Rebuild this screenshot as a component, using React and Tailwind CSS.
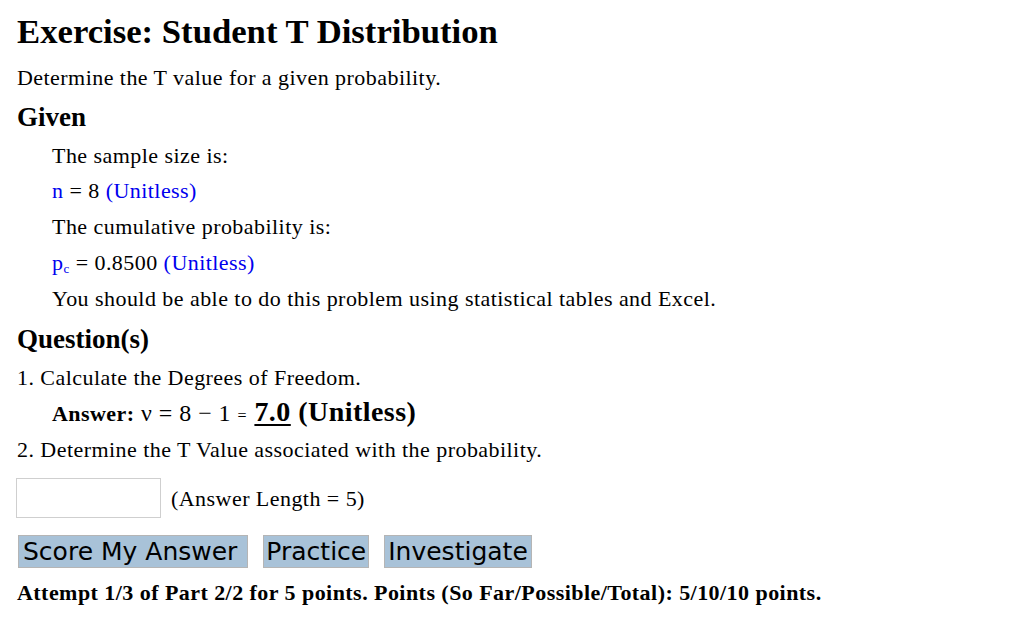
export default function App() {
  const serif = { fontFamily: '"Liberation Serif", "Times New Roman", serif' };
  const btnFont = { fontFamily: '"DejaVu Sans", Verdana, sans-serif' };
  return (
    <div className="w-[1024px] h-[637px] bg-white text-black pl-[17px] pt-[6px]" style={serif}>
      <div className="h-[44px] flex items-end">
        <h1 className="text-[34.7px] font-bold leading-none">Exercise: Student T Distribution</h1>
      </div>
      <div className="h-[39px] flex items-end text-[22px] tracking-[0.45px] leading-none">
        Determine the T value for a given probability.
      </div>
      <div className="h-[42px] flex items-end">
        <h2 className="text-[27px] font-bold leading-none">Given</h2>
      </div>
      <div className="pl-[35px] text-[22px] tracking-[0.45px]">
        <div className="h-[36px] flex items-end leading-none">The sample size is:</div>
        <div className="h-[35px] flex items-end leading-none">
          <span className="text-[#0000ee]">n</span>
          <span>&nbsp;= 8&nbsp;</span>
          <span className="text-[#0000ee]">(Unitless)</span>
        </div>
        <div className="h-[36px] flex items-end leading-none">The cumulative probability is:</div>
        <div className="h-[36px] flex items-end leading-none">
          <span className="text-[#0000ee]">p<sub className="text-[13px]">c</sub></span>
          <span>&nbsp;= 0.8500&nbsp;</span>
          <span className="text-[#0000ee]">(Unitless)</span>
        </div>
        <div className="h-[36px] flex items-end leading-none">
          You should be able to do this problem using statistical tables and Excel.
        </div>
      </div>
      <div className="h-[43px] flex items-end">
        <h2 className="text-[27px] font-bold leading-none">Question(s)</h2>
      </div>
      <div className="text-[22px] tracking-[0.45px]">
        <div className="h-[36px] flex items-end leading-none">1. Calculate the Degrees of Freedom.</div>
        <div className="h-[37px] flex items-end pl-[35px]">
          <div className="leading-none">
            <span className="font-bold">Answer</span>
            <span className="font-bold">:</span>
            <span className="text-[24px]">&nbsp;ν = 8 − 1 </span>
            <span className="text-[16px]">=</span>
            <span className="text-[28px]">&nbsp;</span>
            <span className="font-bold text-[28px] underline underline-offset-[3px] decoration-[2px]">7.0</span>
            <span className="font-bold text-[28px]">&nbsp;(Unitless)</span>
          </div>
        </div>
        <div className="h-[35px] flex items-end leading-none">
          2. Determine the T Value associated with the probability.
        </div>
        <div className="h-[57px] flex items-end">
          <input
            type="text"
            className="w-[145px] h-[40px] -ml-[1px] border border-[#cfcfcf] bg-white outline-none"
          />
          <span className="ml-[10px] mb-[8px] leading-none">(Answer Length = 5)</span>
        </div>
        <div className="flex gap-[15px] mt-[17px] ml-[1px] tracking-normal" style={btnFont}>
          <button className="h-[33px] pl-[4px] pr-[10px] bg-[#a8c2d8] border border-[#b5b5b5] text-[25px] leading-none text-black">Score My Answer</button>
          <button className="h-[33px] px-[2px] bg-[#a8c2d8] border border-[#b5b5b5] text-[25px] leading-none text-black">Practice</button>
          <button className="h-[33px] px-[3px] bg-[#a8c2d8] border border-[#b5b5b5] text-[25px] leading-none text-black">Investigate</button>
        </div>
        <div className="h-[36px] flex items-end leading-none font-bold">
          Attempt 1/3 of Part 2/2 for 5 points. Points (So Far/Possible/Total): 5/10/10 points.
        </div>
      </div>
    </div>
  );
}
